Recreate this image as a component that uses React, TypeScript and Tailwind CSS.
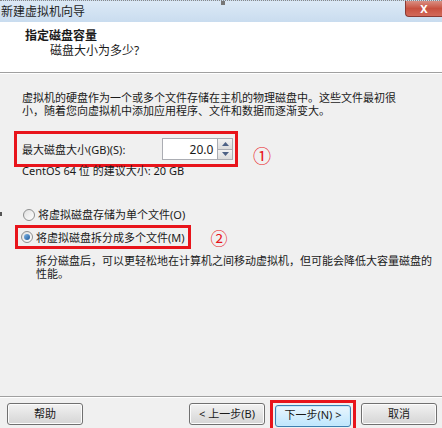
import React from "react";

const font = { fontFamily: '"Noto Sans", "Noto Sans CJK SC", sans-serif' };

function Btn({ children, primary }: { children: React.ReactNode; primary?: boolean }) {
  return (
    <div
      className={
        "w-[76px] h-[22px] rounded-[3px] border flex items-center justify-center text-[11px] text-[#1a1a1a] whitespace-nowrap " +
        (primary
          ? "border-[#3c7fb1] bg-gradient-to-b from-[#eaf6fd] to-[#bee6fd] shadow-[inset_0_0_0_1px_#c7e9fb]"
          : "border-[#707070] bg-gradient-to-b from-[#f2f2f2] to-[#d5d5d5] shadow-[inset_0_0_0_1px_#fcfcfc]")
      }
    >
      {children}
    </div>
  );
}

function Radio({ checked }: { checked?: boolean }) {
  return (
    <div className="w-[12px] h-[12px] rounded-full border border-[#8e8f8f] bg-gradient-to-br from-[#e0e0e0] to-[#ffffff] flex items-center justify-center shrink-0">
      {checked && <div className="w-[6px] h-[6px] rounded-full bg-gradient-to-br from-[#7fb6e6] to-[#1c5a9c]" />}
    </div>
  );
}

export default function App() {
  return (
    <div className="w-[442px] h-[428px] bg-[#f0f0f0] flex flex-col overflow-hidden relative text-[#1a1a1a] whitespace-nowrap" style={font}>
      {/* title bar */}
      <div className="h-[22px] shrink-0 bg-gradient-to-b from-[#dce9f6] to-[#c9dcef] border-t border-dotted border-[#888] relative flex items-center">
        <span className="text-[12px] leading-none text-[#1e1e1e] pl-[1px] pt-[1px]">新建虚拟机向导</span>
        <div className="absolute right-0 top-0 w-[37px] h-[16px] rounded-bl-[4px] border border-[#8a3a33] border-t-0 border-r-0 bg-gradient-to-b from-[#d98f83] via-[#c7503f] to-[#d36a5a] flex items-center justify-center">
          <span className="text-white text-[11px] font-bold leading-none">X</span>
        </div>
        <div className="absolute left-[221px] top-0 w-[4px] h-[4px] bg-[#777]" />
      </div>
      {/* header */}
      <div className="h-[51px] shrink-0 bg-white border-b border-[#a0a0a0] pl-[25px] pt-[7px]">
        <div className="text-[12px] font-bold leading-[14px]">指定磁盘容量</div>
        <div className="text-[12px] leading-[14px] pl-[25px] mt-[1px]">磁盘大小为多少?</div>
      </div>
      <div className="h-px bg-white shrink-0" />
      {/* body */}
      <div className="flex-1 flex flex-col pl-[22px] pt-[17px] text-[11px] leading-[13px]">
        <div>虚拟机的硬盘作为一个或多个文件存储在主机的物理磁盘中。这些文件最初很</div>
        <div>小，随着您向虚拟机中添加应用程序、文件和数据而逐渐变大。</div>

        <div className="flex items-center mt-[14px] -ml-[8px]">
          <div className="w-[224px] h-[36px] border-[3px] border-[#e8141b] flex items-center pl-[5px]">
            <span>最大磁盘大小(GB)(S):</span>
            <div className="ml-[37px] flex items-center">
              <div className="w-[56px] h-[22px] bg-white border border-[#abadb3] flex items-center justify-end pr-[4px] text-[12px]">20.0</div>
              <div className="w-[15px] h-[22px] flex flex-col border border-[#abadb3] border-l-0">
                <div className="flex-1 bg-gradient-to-b from-[#f3f3f3] to-[#dcdcdc] border-b border-[#abadb3] flex items-center justify-center">
                  <svg width="7" height="4" viewBox="0 0 7 4"><path d="M0 4 L3.5 0 L7 4Z" fill="#4d6185" /></svg>
                </div>
                <div className="flex-1 bg-gradient-to-b from-[#f3f3f3] to-[#dcdcdc] flex items-center justify-center">
                  <svg width="7" height="4" viewBox="0 0 7 4"><path d="M0 0 L3.5 4 L7 0Z" fill="#4d6185" /></svg>
                </div>
              </div>
            </div>
          </div>
          <span className="ml-[15px] text-[#e8141b] text-[18px] leading-none mt-[12px]" style={{ fontFamily: '"Noto Sans CJK SC", sans-serif' }}>①</span>
        </div>
        <div className="mt-[-3px]">CentOS 64 位 的建议大小: 20 GB</div>

        <div className="flex items-center gap-[3px] mt-[31px] pl-[1px]">
          <Radio />
          <span>将虚拟磁盘存储为单个文件(O)</span>
        </div>
        <div className="flex items-center mt-[4px] -ml-[7px]">
          <div className="h-[24px] border-[3px] border-[#e8141b] flex items-center gap-[3px] pl-[3px] pr-[3px]">
            <Radio checked />
            <span>将虚拟磁盘拆分成多个文件(M)</span>
          </div>
          <span className="ml-[20px] text-[#e8141b] text-[17px] leading-none" style={{ fontFamily: '"Noto Sans CJK SC", sans-serif' }}>②</span>
        </div>
        <div className="pl-[14px] mt-[5px]">
          <div>拆分磁盘后，可以更轻松地在计算机之间移动虚拟机，但可能会降低大容量磁盘的</div>
          <div>性能。</div>
        </div>
        <div className="flex-1" />
      </div>
      {/* footer */}
      <div className="shrink-0 border-t border-[#a0a0a0]">
        <div className="border-t border-white h-[31px] flex items-center px-[7px] pt-[2px]">
          <Btn>帮助</Btn>
          <div className="flex-1" />
          <Btn>&lt; 上一步(B)</Btn>
          <div className="ml-[5px] border-[3px] border-[#e8141b] px-[2px] pt-[2px] pb-[3px] -mb-[4px]">
            <Btn primary>下一步(N) &gt;</Btn>
          </div>
          <div className="ml-[5px] -mr-[2px]">
            <Btn>取消</Btn>
          </div>
        </div>
      </div>
      <div className="absolute left-0 top-[212px] w-[2px] h-[4px] bg-[#555]" />
    </div>
  );
}
